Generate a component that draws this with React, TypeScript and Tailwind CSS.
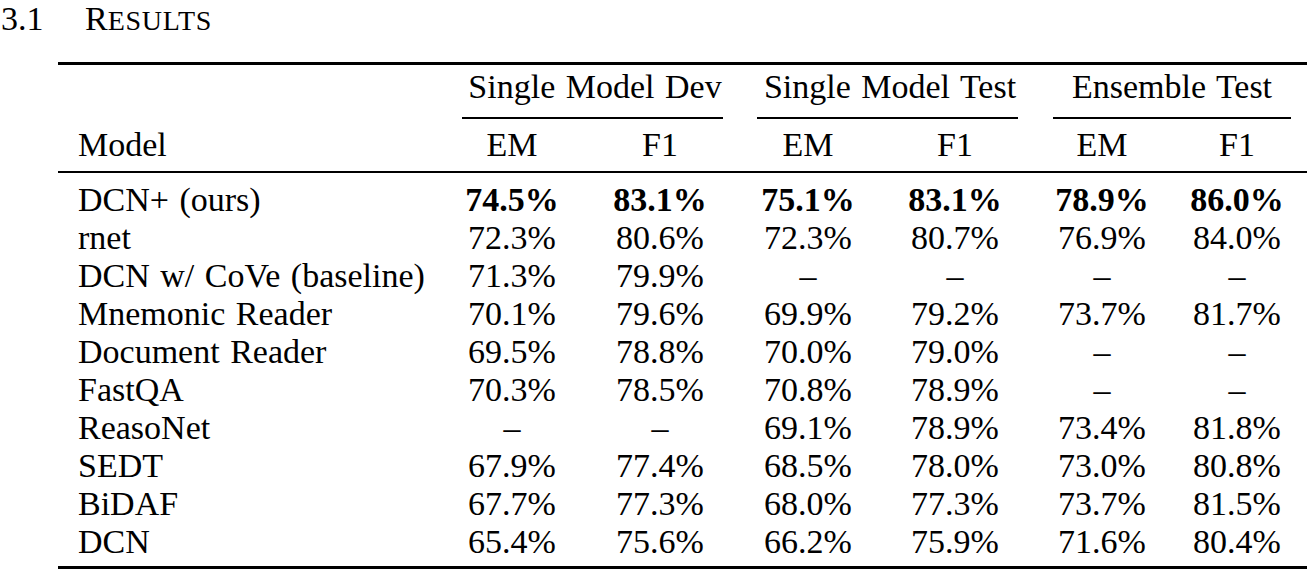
import React from "react";

type Row = { name: string; vals: string[]; bold?: boolean };

const rows: Row[] = [
  { name: "DCN+ (ours)", vals: ["74.5%", "83.1%", "75.1%", "83.1%", "78.9%", "86.0%"], bold: true },
  { name: "rnet", vals: ["72.3%", "80.6%", "72.3%", "80.7%", "76.9%", "84.0%"] },
  { name: "DCN w/ CoVe (baseline)", vals: ["71.3%", "79.9%", "–", "–", "–", "–"] },
  { name: "Mnemonic Reader", vals: ["70.1%", "79.6%", "69.9%", "79.2%", "73.7%", "81.7%"] },
  { name: "Document Reader", vals: ["69.5%", "78.8%", "70.0%", "79.0%", "–", "–"] },
  { name: "FastQA", vals: ["70.3%", "78.5%", "70.8%", "78.9%", "–", "–"] },
  { name: "ReasoNet", vals: ["–", "–", "69.1%", "78.9%", "73.4%", "81.8%"] },
  { name: "SEDT", vals: ["67.9%", "77.4%", "68.5%", "78.0%", "73.0%", "80.8%"] },
  { name: "BiDAF", vals: ["67.7%", "77.3%", "68.0%", "77.3%", "73.7%", "81.5%"] },
  { name: "DCN", vals: ["65.4%", "75.6%", "66.2%", "75.9%", "71.6%", "80.4%"] },
];

const GRID = "grid grid-cols-[389px_130px_166px_130px_164px_130px_140px]";

export default function App() {
  return (
    <div className="w-[1311px] h-[576px] bg-white text-black overflow-hidden font-['Liberation_Serif',serif] text-[34px]">
      {/* Section heading */}
      <div className="flex leading-[38px] whitespace-nowrap">
        <span className="pl-[1px] w-[85px]">3.1</span>
        <span>
          R<span className="text-[28px] tracking-[0.7px]">ESULTS</span>
        </span>
      </div>

      {/* Table */}
      <div className="ml-[58px] w-[1249px] mt-[22px] flex flex-col">
        <div className="h-[3px] bg-black" />

        {/* Header row 1 */}
        <div className={`${GRID} pt-[3px] leading-[38px] whitespace-nowrap [word-spacing:2px]`}>
          <div />
          <div className="col-span-2 text-center">Single Model Dev</div>
          <div className="col-span-2 text-center">Single Model Test</div>
          <div className="col-span-2 text-center">Ensemble Test</div>
        </div>

        {/* cmidrules */}
        <div className={`${GRID} mt-[11px]`}>
          <div />
          <div className="col-span-2 ml-[15px] mr-[20px] h-[1.5px] bg-black" />
          <div className="col-span-2 ml-[14px] mr-[19px] h-[1.5px] bg-black" />
          <div className="col-span-2 ml-[16px] mr-[16px] h-[1.5px] bg-black" />
        </div>

        {/* Header row 2 */}
        <div className={`${GRID} mt-[7px] leading-[38px] whitespace-nowrap`}>
          <div className="pl-[20px]">Model</div>
          <div className="text-center">EM</div>
          <div className="text-center">F1</div>
          <div className="text-center">EM</div>
          <div className="text-center">F1</div>
          <div className="text-center">EM</div>
          <div className="text-center">F1</div>
        </div>

        <div className="mt-[7px] h-[2px] bg-black" />

        {/* Body */}
        <div className="mt-[8px] flex flex-col">
          {rows.map((r) => (
            <div key={r.name} className={`${GRID} leading-[38.1px] whitespace-nowrap`}>
              <div className="pl-[20px] [word-spacing:2px]">{r.name}</div>
              {r.vals.map((v, i) => (
                <div key={i} className={`text-center ${r.bold ? "font-bold" : ""}`}>
                  {v}
                </div>
              ))}
            </div>
          ))}
        </div>

        <div className="mt-[5px] h-[3px] bg-black" />
      </div>
    </div>
  );
}
